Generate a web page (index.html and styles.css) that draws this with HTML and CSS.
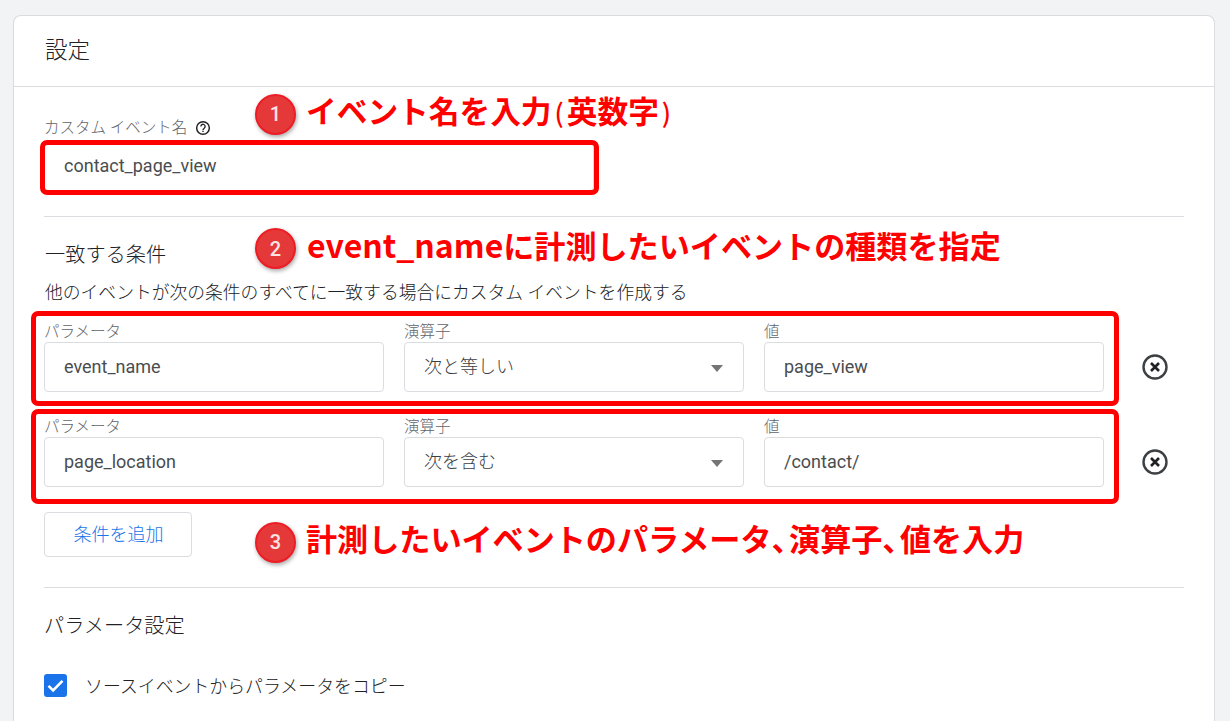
FILE: index.html
```html
<!DOCTYPE html>
<html lang="ja">
<head>
<meta charset="utf-8">
<title>設定</title>
<link rel="stylesheet" href="styles.css">
</head>
<body>
<main class="card">
  <header class="card-header">設定</header>
  <div class="card-body">
    <section class="name-section">
      <div class="label name-label">カスタム イベント名
        <svg class="help" viewBox="0 0 24 24" width="16" height="16"><circle cx="12" cy="12" r="9.5" fill="none" stroke="#202124" stroke-width="2.2"/><path d="M8.8 9.6a3.2 3.2 0 1 1 5.2 2.5c-1.2.9-2 1.4-2 2.9" fill="none" stroke="#202124" stroke-width="2"/><rect x="11" y="16" width="2" height="2" fill="#202124"/></svg>
      </div>
      <div class="input name-input">contact_page_view</div>
    </section>
    <hr class="divider">
    <section class="conditions">
      <h2 class="section-title">一致する条件</h2>
      <p class="desc">他のイベントが次の条件のすべてに一致する場合にカスタム イベントを作成する</p>
      <div class="cond-row">
        <div class="field"><div class="label">パラメータ</div><div class="input">event_name</div></div>
        <div class="field"><div class="label">演算子</div><div class="input select">次と等しい<span class="arrow"></span></div></div>
        <div class="field"><div class="label">値</div><div class="input">page_view</div></div>
        <svg class="remove" viewBox="0 0 28 28" width="28" height="28"><circle cx="14" cy="14" r="11.5" fill="none" stroke="#3c4043" stroke-width="2.4"/><path d="M10 10l8 8M18 10l-8 8" stroke="#202124" stroke-width="2.6"/></svg>
      </div>
      <div class="cond-row">
        <div class="field"><div class="label">パラメータ</div><div class="input">page_location</div></div>
        <div class="field"><div class="label">演算子</div><div class="input select">次を含む<span class="arrow"></span></div></div>
        <div class="field"><div class="label">値</div><div class="input">/contact/</div></div>
        <svg class="remove" viewBox="0 0 28 28" width="28" height="28"><circle cx="14" cy="14" r="11.5" fill="none" stroke="#3c4043" stroke-width="2.4"/><path d="M10 10l8 8M18 10l-8 8" stroke="#202124" stroke-width="2.6"/></svg>
      </div>
      <button class="add-btn">条件を追加</button>
    </section>
    <hr class="divider second">
    <section class="params">
      <h2 class="params-title">パラメータ設定</h2>
      <label class="check-row">
        <span class="checkbox"><svg viewBox="0 0 23 23" width="23" height="23"><path d="M4.5 11.8l4.6 4.6 9.4-9.6" fill="none" stroke="#fff" stroke-width="2.6"/></svg></span>
        ソースイベントからパラメータをコピー
      </label>
    </section>
  </div>

  <div class="red-box box-name"></div>
  <div class="red-box box-row1"></div>
  <div class="red-box box-row2"></div>

  <div class="note note-1"><span class="badge">1</span><span class="note-text">イベント名を入力<span class="paren">(</span>英数字<span class="paren">)</span></span></div>
  <div class="note note-2"><span class="badge">2</span><span class="note-text"><span class="latin">event_name</span>に計測したいイベントの種類を指定</span></div>
  <div class="note note-3"><span class="badge">3</span><span class="note-text">計測したいイベントのパラメータ<span class="comma">、</span>演算子<span class="comma">、</span>値を入力</span></div>
</main>
</body>
</html>
```
FILE: styles.css
```css
* { box-sizing: border-box; }
html, body { margin: 0; height: 721px; overflow: hidden; }
body {
  background: #f1f3f4;
  padding: 15px 15px 0 13px;
  font-family: Roboto, "Noto Sans CJK JP", sans-serif;
  color: #3c4043;
}
.card {
  position: relative;
  height: 706px;
  overflow: hidden;
  background: #fff;
  border: 1px solid #dadce0;
  border-bottom: 0;
  border-radius: 8px 8px 0 0;
}
.card-header {
  height: 71px;
  padding: 17px 31px 0;
  font-size: 22.5px;
  line-height: 34px;
  font-weight: 300;
  color: #202124;
  border-bottom: 1px solid #dadce0;
}
.card-body { padding: 0 30px; }
.label {
  font-size: 15.5px;
  line-height: 20px;
  font-weight: 300;
  color: #5f6368;
}
.name-section { padding-top: 31px; }
.name-label {
  display: flex;
  align-items: center;
  gap: 8px;
  height: 20px;
  margin-bottom: 3px;
}
.help { flex: none; }
.input {
  position: relative;
  height: 50px;
  padding: 0 19px 2px;
  display: flex;
  align-items: center;
  font-size: 18px;
  font-weight: 400;
  color: #4a4d50;
  border: 1px solid #dadce0;
  border-radius: 4px;
  background: #fff;
}
.name-input { width: 550px; }
.select { font-weight: 300; color: #3c4043; padding-bottom: 4px; }
.arrow {
  position: absolute;
  right: 20px;
  top: 22px;
  width: 0;
  height: 0;
  border-left: 6.5px solid transparent;
  border-right: 6.5px solid transparent;
  border-top: 7px solid #757575;
}
.divider {
  margin: 25px 0 0;
  border: 0;
  border-top: 1px solid #dadce0;
}
.section-title, .params-title {
  margin: 0;
  font-size: 20.2px;
  line-height: 30px;
  font-weight: 300;
  color: #202124;
}
.section-title { padding: 23px 0 0 1px; }
.desc {
  margin: 12px 0 0 1px;
  font-size: 17.8px;
  line-height: 22px;
  font-weight: 300;
  color: #202124;
}
.cond-row {
  display: flex;
  align-items: flex-end;
  gap: 20px;
  height: 70px;
  margin-top: 18px;
}
.cond-row + .cond-row { margin-top: 25px; }
.field { width: 340px; }
.field .label { height: 20px; }
.remove { flex: none; margin: 0 0 11px 17px; }
.add-btn {
  display: block;
  width: 148px;
  height: 45px;
  margin-top: 25px;
  padding: 0 0 0 1px;
  font: 300 18px/1 Roboto, "Noto Sans CJK JP", sans-serif;
  color: #1a73e8;
  background: #fff;
  border: 1px solid #dadce0;
  border-radius: 4px;
}
.divider.second { margin-top: 30px; }
.params-title { padding-top: 23px; }
.check-row {
  display: flex;
  align-items: center;
  gap: 18px;
  margin-top: 31px;
  font-size: 17.9px;
  font-weight: 300;
  color: #202124;
}
.checkbox {
  display: block;
  width: 23px;
  height: 23px;
  background: #1a73e8;
  border-radius: 3px;
}
.checkbox svg { display: block; }

/* Annotations over the form */
.red-box {
  position: absolute;
  border: 5px solid #f00;
  border-radius: 7px;
}
.box-name { left: 26px; top: 124px; width: 559px; height: 55px; }
.box-row1 { left: 17px; top: 295px; width: 1088px; height: 95px; }
.box-row2 { left: 17px; top: 393px; width: 1088px; height: 95px; }
.note {
  position: absolute;
  left: 241px;
  display: flex;
  align-items: center;
  gap: 10px;
  white-space: nowrap;
}
.note-1 { top: 76px; }
.note-2 { top: 211px; }
.note-3 { top: 505px; }
.badge {
  flex: none;
  width: 41px;
  height: 41px;
  display: flex;
  align-items: center;
  justify-content: center;
  border-radius: 50%;
  background: #e53838;
  border: 2px solid #ee1c25;
  box-shadow: 1px 2px 4px rgba(0,0,0,.35);
  color: #fbe3e3;
  font-size: 20px;
  font-weight: 500;
  font-family: Roboto, sans-serif;
}
.note-text {
  color: #f00;
  font-size: 31.1px;
  line-height: 42px;
  font-weight: 700;
  transform: translateY(-4px);
  font-family: "Noto Sans CJK JP", sans-serif;
}
.note-1 .note-text { font-size: 30.7px; transform: translateY(-3px); }
.latin { font-size: 32px; margin-left: 1px; }
.comma { font-feature-settings: "halt"; letter-spacing: 2px; }
.paren { font-size: 26px; margin: 0 3px; font-weight: 500; }
```
